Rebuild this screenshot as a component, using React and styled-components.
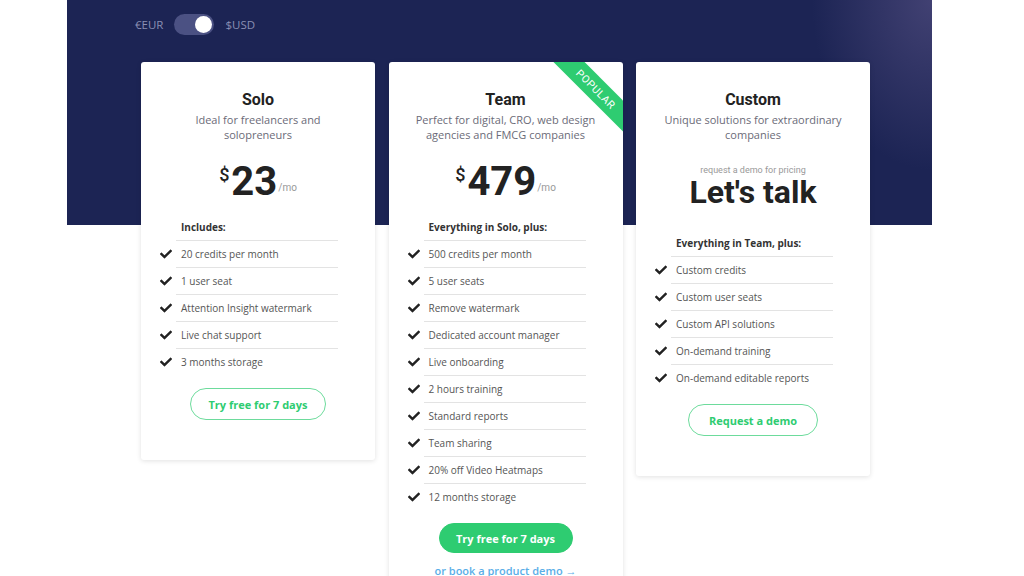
import React from "react";
import styled, { createGlobalStyle } from "styled-components";
import { FaCheck } from "react-icons/fa";

const GlobalStyle = createGlobalStyle`
  body {
    margin: 0;
    background: #fff;
    font-family: "Open Sans", Arial, sans-serif;
  }
`;

export const Section = styled.section`
  width: 1024px;
  height: 576px;
  overflow: hidden;
  padding-top: 14px;
  box-sizing: border-box;
  background:
    radial-gradient(ellipse 120px 170px at 865px 0, rgba(72, 70, 120, 0.85) 0%, rgba(28, 36, 84, 0) 100%) 67px 0 / 865px 225px no-repeat,
    linear-gradient(#1c2454, #1c2454) 67px 0 / 865px 225px no-repeat,
    #fff;
`;

export const CurrencyRow = styled.div`
  display: flex;
  align-items: center;
  gap: 11px;
  padding-left: 135px;
  height: 21px;
  font-family: "Open Sans", sans-serif;
  font-size: 11.5px;
  color: #8a8fb3;
`;

export const Toggle = styled.div`
  width: 40px;
  height: 21px;
  border-radius: 11px;
  background: #4b5183;
  display: flex;
  align-items: center;
  justify-content: flex-end;
  padding: 0 2px;
  box-sizing: border-box;
`;

export const Knob = styled.div`
  width: 17px;
  height: 17px;
  border-radius: 50%;
  background: #fff;
`;

export const Cards = styled.div`
  display: flex;
  align-items: flex-start;
  gap: 13.5px;
  padding-left: 141px;
  margin-top: 27px;
`;

export const Card = styled.div`
  position: relative;
  overflow: hidden;
  width: 234px;
  background: #fff;
  border-radius: 3px;
  box-shadow: 0 1px 5px rgba(0, 0, 0, 0.12);
  padding: 28px 0 40px;
  box-sizing: border-box;
  display: flex;
  flex-direction: column;
  align-items: center;
`;

export const Ribbon = styled.div`
  position: absolute;
  left: 147px;
  top: 16px;
  width: 120px;
  height: 22px;
  background: #2ecc71;
  transform: rotate(45deg);
  color: #fff;
  font-family: Roboto, sans-serif;
  font-size: 10.5px;
  letter-spacing: 0.6px;
  display: flex;
  align-items: center;
  justify-content: center;
`;

export const Title = styled.div`
  font-family: Roboto, sans-serif;
  font-weight: 700;
  font-size: 16px;
  line-height: 20px;
  color: #222;
  margin-bottom: 2px;
`;

export const Subtitle = styled.div`
  font-size: 11px;
  line-height: 15px;
  color: #6b6b78;
  text-align: center;
`;

export const Price = styled.div`
  display: flex;
  align-items: flex-start;
  justify-content: center;
  margin: 20px 0 18px;
  height: 40px;
  font-family: Roboto, sans-serif;
  color: #222;
`;

export const Currency = styled.span`
  font-size: 18px;
  font-weight: 500;
  line-height: 1;
  margin: 4px 2px 0 0;
`;

export const Amount = styled.span`
  font-size: 40px;
  font-weight: 700;
  line-height: 40px;
`;

export const Per = styled.span`
  font-size: 10px;
  color: #999;
  margin-top: 20px;
  margin-left: 1px;
`;

export const TalkNote = styled.div`
  margin-top: 22px;
  font-family: Roboto, sans-serif;
  font-size: 9px;
  line-height: 12px;
  color: #999;
`;

export const Talk = styled.div`
  font-family: Roboto, sans-serif;
  font-weight: 700;
  font-size: 32px;
  line-height: 32px;
  color: #222;
  margin-bottom: 28px;
`;

export const List = styled.div`
  align-self: stretch;
  margin: 0 37px 0 19px;
`;

export const ListHead = styled.div`
  padding: 0 0 6px 21px;
  font-size: 10px;
  line-height: 14px;
  font-weight: 700;
  color: #333;
`;

export const Item = styled.div`
  display: flex;
  height: 27px;
`;

export const Tick = styled.div`
  width: 16px;
  display: flex;
  align-items: center;
  color: #222;
  font-size: 12px;
`;

export const ItemText = styled.div`
  flex: 1;
  border-top: 1px solid #e3e3e3;
  padding-left: 5px;
  display: flex;
  align-items: center;
  font-size: 10px;
  color: #555;
`;

export const Button = styled.div`
  margin-top: 13px;
  width: ${(p) => p.$width}px;
  height: ${(p) => (p.$filled ? 30 : 32)}px;
  box-sizing: border-box;
  border-radius: 16px;
  border: 1px solid ${(p) => (p.$filled ? "#2ecc71" : "#6ddb9c")};
  background: ${(p) => (p.$filled ? "#2ecc71" : "#fff")};
  color: ${(p) => (p.$filled ? "#fff" : "#2ecc71")};
  font-size: 11px;
  font-weight: 700;
  display: flex;
  align-items: center;
  justify-content: center;
`;

export const DemoLink = styled.div`
  margin-top: 11px;
  font-size: 11px;
  line-height: 13px;
  font-weight: 600;
  color: #5aaee8;
`;

const plans = [
  {
    name: "Solo",
    sub: ["Ideal for freelancers and", "solopreneurs"],
    price: "23",
    head: "Includes:",
    items: [
      "20 credits per month",
      "1 user seat",
      "Attention Insight watermark",
      "Live chat support",
      "3 months storage",
    ],
    button: "Try free for 7 days",
    width: 136,
  },
  {
    name: "Team",
    sub: ["Perfect for digital, CRO, web design", "agencies and FMCG companies"],
    price: "479",
    head: "Everything in Solo, plus:",
    items: [
      "500 credits per month",
      "5 user seats",
      "Remove watermark",
      "Dedicated account manager",
      "Live onboarding",
      "2 hours training",
      "Standard reports",
      "Team sharing",
      "20% off Video Heatmaps",
      "12 months storage",
    ],
    button: "Try free for 7 days",
    width: 134,
    popular: true,
  },
  {
    name: "Custom",
    sub: ["Unique solutions for extraordinary", "companies"],
    head: "Everything in Team, plus:",
    items: [
      "Custom credits",
      "Custom user seats",
      "Custom API solutions",
      "On-demand training",
      "On-demand editable reports",
    ],
    button: "Request a demo",
    width: 130,
  },
];

const PlanCard = ({ plan }) => (
  <Card>
    {plan.popular && <Ribbon>POPULAR</Ribbon>}
    <Title>{plan.name}</Title>
    <Subtitle>
      {plan.sub[0]}
      <br />
      {plan.sub[1]}
    </Subtitle>
    {plan.price ? (
      <Price>
        <Currency>$</Currency>
        <Amount>{plan.price}</Amount>
        <Per>/mo</Per>
      </Price>
    ) : (
      <>
        <TalkNote>request a demo for pricing</TalkNote>
        <Talk>Let's talk</Talk>
      </>
    )}
    <List>
      <ListHead>{plan.head}</ListHead>
      {plan.items.map((item) => (
        <Item key={item}>
          <Tick>
            <FaCheck />
          </Tick>
          <ItemText>{item}</ItemText>
        </Item>
      ))}
    </List>
    <Button $width={plan.width} $filled={plan.popular}>
      {plan.button}
    </Button>
    {plan.popular && <DemoLink>or book a product demo →</DemoLink>}
  </Card>
);

const App = () => {
  return (
    <>
      <GlobalStyle />
      <Section>
        <CurrencyRow>
          <span>€EUR</span>
          <Toggle>
            <Knob />
          </Toggle>
          <span>$USD</span>
        </CurrencyRow>
        <Cards>
          {plans.map((plan) => (
            <PlanCard key={plan.name} plan={plan} />
          ))}
        </Cards>
      </Section>
    </>
  );
};

export default App;
